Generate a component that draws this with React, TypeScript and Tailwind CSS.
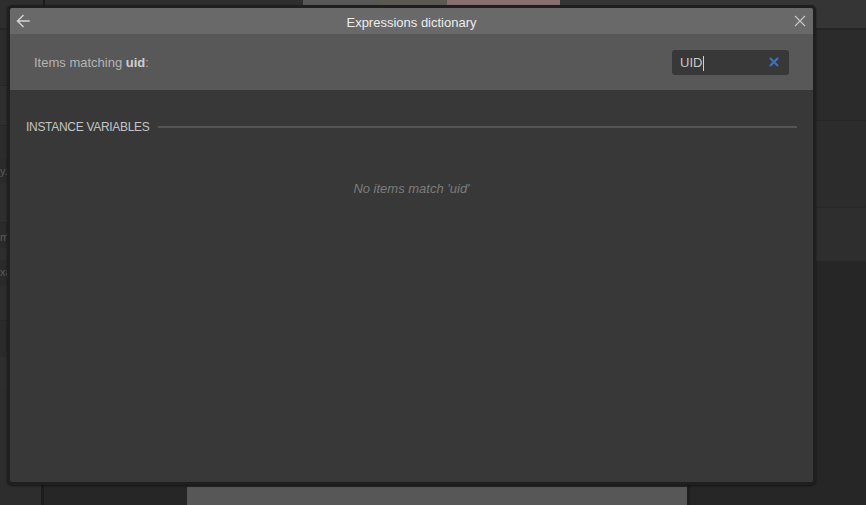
import React from "react";

function BackArrow() {
  return (
    <svg width="14" height="14" viewBox="0 0 14 14" fill="none">
      <path d="M13 7H1.5M7 1.5L1.5 7L7 12.5" stroke="#d4d4d4" strokeWidth="1.4" strokeLinecap="square" />
    </svg>
  );
}

function CloseX() {
  return (
    <svg width="12" height="12" viewBox="0 0 12 12" fill="none">
      <path d="M1 1L11 11M11 1L1 11" stroke="#c4c4c4" strokeWidth="1.2" />
    </svg>
  );
}

function BlueX() {
  return (
    <svg width="10" height="10" viewBox="0 0 10 10" fill="none">
      <path d="M1 1L9 9M9 1L1 9" stroke="#3d70b8" strokeWidth="2.2" />
    </svg>
  );
}

export default function App() {
  const font = { fontFamily: '"Liberation Sans", Arial, sans-serif' };
  return (
    <div className="relative w-[866px] h-[505px] overflow-hidden bg-[#262626]" style={font}>
      {/* background app */}
      <div className="flex flex-col w-full h-full">
        <div className="flex h-[30px] border-b-2 border-[#242424]">
          <div className="w-[303px] bg-[#2e2e2e] flex">
            <div className="ml-[43px] w-[2px] bg-[#1c1c1c]" />
          </div>
          <div className="w-[77px] bg-[#585858]" />
          <div className="w-[67px] bg-[#5a5952]" />
          <div className="w-[113px] bg-[#8a6f70]" />
          <div className="flex-1 bg-[#353535]" />
        </div>
        <div className="flex flex-1">
          <div className="w-[41px] flex flex-col bg-[#2c2c2c] text-[11px] leading-none text-[#5a5a5a]">
            <div className="h-[56px] border-b border-[#262626]" />
            <div className="h-[40px] bg-[#2f2f2f] border-b border-[#262626]" />
            <div className="h-[32px] bg-[#2c2c2c]" />
            <div className="h-[25px] bg-[#2a2a2a] pt-[8px]">y.a</div>
            <div className="h-[40px] bg-[#2e2e2e] border-b border-[#262626]" />
            <div className="h-[25px] bg-[#2a2a2a] pt-[9px]">mp</div>
            <div className="h-[12px] bg-[#2e2e2e]" />
            <div className="h-[25px] bg-[#2a2a2a] pt-[7px]">xa</div>
            <div className="h-[36px] bg-[#2d2d2d] border-b border-[#262626]" />
            <div className="h-[36px] bg-[#2a2a2a]" />
            <div className="h-[30px] bg-[#2e2e2e]" />
            <div className="flex-1 bg-[#2d2d2d]" />
          </div>
          <div className="w-[3px] bg-[#1e1e1e]" />
          <div className="w-[143px] bg-[#262626]" />
          <div className="w-[500px] flex flex-col">
            <div className="flex-1 bg-[#2a2a2a]" />
            <div className="h-[18px] bg-[#575757]" />
          </div>
          <div className="w-[3px] bg-[#1e1e1e]" />
          <div className="flex-1 flex flex-col">
            <div className="h-[91px] bg-[#2b2b2b] border-b border-[#262626]" />
            <div className="h-[87px] bg-[#2c2c2c] border-b border-[#272727]" />
            <div className="h-[53px] bg-[#2e2e2e]" />
            <div className="flex-1 bg-[#262626]" />
          </div>
        </div>
      </div>

      {/* dialog */}
      <div className="absolute left-[7px] top-[5px] w-[809px] h-[480px] border-[3px] border-[#1f1f1f] rounded-[5px] bg-[#383838] flex flex-col overflow-hidden shadow-[0_1px_2px_rgba(0,0,0,0.5)]">
        <div className="h-[26px] bg-[#696969] flex items-center justify-between px-[6px] relative">
          <div className="w-[14px] h-[14px] flex items-center justify-center">
            <BackArrow />
          </div>
          <div className="absolute inset-0 pt-[3px] flex items-center justify-center text-[13px] text-[#ececec]">
            Expressions dictionary
          </div>
          <div className="w-[12px] h-[12px] mr-[1px] flex items-center justify-center relative">
            <CloseX />
          </div>
        </div>
        <div className="h-[56px] bg-[#585858] flex items-center justify-between pl-[24px] pr-[24px]">
          <div className="text-[13px] text-[#b4b4b4] pt-[2px]">
            Items matching <span className="font-bold text-[#cfcfcf]">uid</span>:
          </div>
          <div className="w-[117px] h-[25px] rounded-[3px] bg-[#383838] flex items-center justify-between pl-[8px] pr-[10px]">
            <div className="flex items-center text-[13px] text-[#c8c8c8] pt-[2px]">
              UID<span className="w-px h-[15px] bg-[#d0d0d0] ml-px" />
            </div>
            <BlueX />
          </div>
        </div>
        <div className="flex-1 flex flex-col px-[16px] pt-[28px]">
          <div className="flex items-center gap-[8px]">
            <div className="text-[12px] tracking-[-0.3px] text-[#c4c4c4] whitespace-nowrap">INSTANCE VARIABLES</div>
            <div className="flex-1 h-[2px] bg-[#555555]" />
          </div>
          <div className="mt-[43px] text-center text-[13px] italic text-[#7c7c7c]">No items match 'uid'</div>
        </div>
      </div>
    </div>
  );
}
